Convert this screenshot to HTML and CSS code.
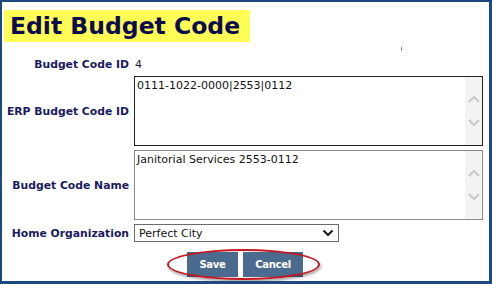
FILE: index.html
```html
<!DOCTYPE html>
<html>
<head>
<meta charset="utf-8">
<link rel="stylesheet" href="styles.css">
</head>
<body>
<div class="frame">
  <div class="head">
    <h1 class="title">Edit Budget Code</h1>
    <span class="mark"></span>
  </div>
  <div class="form">
    <div class="label row1">Budget Code ID</div>
    <div class="value row1">4</div>

    <div class="label">ERP Budget Code ID</div>
    <div class="area dark">
      <textarea class="ta">0111-1022-0000|2553|0112</textarea>
      <div class="sb">
        <svg width="16" height="10" viewBox="0 0 16 10"><path d="M3 8 L8 3 L13 8" fill="none" stroke="#c9c9c9" stroke-width="2"/></svg>
        <svg width="16" height="10" viewBox="0 0 16 10"><path d="M3 2 L8 7 L13 2" fill="none" stroke="#c9c9c9" stroke-width="2"/></svg>
      </div>
    </div>

    <div class="label">Budget Code Name</div>
    <div class="area light">
      <textarea class="ta">Janitorial Services 2553-0112</textarea>
      <div class="sb">
        <svg width="16" height="10" viewBox="0 0 16 10"><path d="M3 8 L8 3 L13 8" fill="none" stroke="#c9c9c9" stroke-width="2"/></svg>
        <svg width="16" height="10" viewBox="0 0 16 10"><path d="M3 2 L8 7 L13 2" fill="none" stroke="#c9c9c9" stroke-width="2"/></svg>
      </div>
    </div>

    <div class="label">Home Organization</div>
    <div class="select">
      <span class="sel-text">Perfect City</span>
      <svg width="12" height="8" viewBox="0 0 12 8"><path d="M1.5 1.5 L6 6 L10.5 1.5" fill="none" stroke="#111" stroke-width="2"/></svg>
    </div>
  </div>
  <div class="buttons">
    <div class="btn-wrap">
      <button class="btn save">Save</button>
      <button class="btn cancel">Cancel</button>
      <span class="ring"></span>
    </div>
  </div>
</div>
</body>
</html>
```

FILE: styles.css
```css
html, body {
  margin: 0;
  padding: 0;
  background: #fff;
}
.frame {
  width: 492px;
  height: 284px;
  box-sizing: border-box;
  border-style: solid;
  border-color: #1d4a7e;
  border-width: 2px 3px 3px 2px;
  font-family: "DejaVu Sans", Verdana, sans-serif;
  overflow: hidden;
}
.head {
  display: flex;
  align-items: flex-start;
  height: 32px;
  margin: 8px 0 0 2px;
}
.title {
  margin: 0;
  background: #fdfd56;
  color: #0c0c4e;
  font-size: 23.5px;
  font-weight: bold;
  line-height: 32px;
  height: 32px;
  padding: 0 10px 0 6px;
  white-space: nowrap;
}
.mark {
  width: 1px;
  height: 4px;
  background: #8a8a8a;
  margin: 37px 0 0 151px;
  flex: none;
}
.form {
  display: grid;
  grid-template-columns: 127px 349px;
  column-gap: 5px;
  row-gap: 4px;
  margin-top: 15px;
  align-items: center;
}
.label {
  text-align: right;
  font-weight: bold;
  font-size: 10.8px;
  color: #1a1a60;
  white-space: nowrap;
}
.row1 {
  height: 15px;
  line-height: 15px;
}
.value {
  font-size: 11px;
  color: #1a1a40;
  padding-left: 1px;
}
.area {
  height: 70px;
  box-sizing: border-box;
  border: 1px solid #222;
  display: flex;
  background: #fff;
}
.area.light {
  border-color: #8a8a8a;
}
.ta {
  flex: 1;
  border: 0;
  outline: none;
  resize: none;
  overflow: hidden;
  margin: 0;
  padding: 2px 2px;
  font-family: "DejaVu Sans", Verdana, sans-serif;
  font-size: 11px;
  line-height: 14px;
  color: #111;
  background: transparent;
}
.sb {
  width: 17px;
  background: #f3f3f3;
  display: flex;
  flex-direction: column;
  align-items: center;
  padding-top: 17px;
  gap: 14px;
}
.sb svg {
  display: block;
}
.select {
  width: 205px;
  height: 18px;
  box-sizing: border-box;
  border: 1px solid #6b6b6b;
  display: flex;
  align-items: center;
  justify-content: space-between;
  padding: 0 4px 0 4px;
  font-size: 11px;
  color: #111;
}
.buttons {
  display: flex;
  justify-content: center;
  margin-top: 10px;
  padding-right: 1px;
}
.btn-wrap {
  position: relative;
  display: flex;
  gap: 5px;
}
.btn {
  height: 25px;
  border: 0;
  margin: 0;
  background: #4a6a8e;
  color: #fff;
  font-family: "DejaVu Sans", Verdana, sans-serif;
  font-weight: bold;
  font-size: 10px;
  letter-spacing: -0.3px;
  padding: 0;
}
.save { width: 51px; }
.cancel { width: 60px; }
.ring {
  position: absolute;
  left: -20px;
  top: -3px;
  width: 149px;
  height: 27px;
  border: 2px solid #c4161f;
  border-radius: 50%;
  box-shadow: 1px 2px 3px rgba(0,0,0,0.35);
  pointer-events: none;
}
```
